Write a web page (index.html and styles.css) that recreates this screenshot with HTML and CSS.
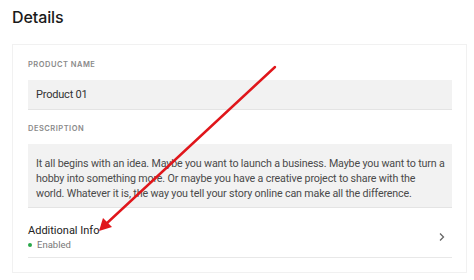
FILE: index.html
```html
<!DOCTYPE html>
<html>
<head>
<meta charset="utf-8">
<link rel="stylesheet" href="styles.css">
</head>
<body>
<div class="page">
  <h1 class="title">Details</h1>
  <div class="card">
    <div class="field">
      <div class="label">PRODUCT NAME</div>
      <div class="input">Product 01</div>
    </div>
    <div class="field">
      <div class="label">DESCRIPTION</div>
      <div class="textarea">It all begins with an idea. Maybe you want to launch a business. Maybe you want to turn a<br>hobby into something more. Or maybe you have a creative project to share with the<br>world. Whatever it is, the way you tell your story online can make all the difference.</div>
    </div>
    <div class="row">
      <div class="row-text">
        <div class="row-title">Additional Info</div>
        <div class="status"><span class="dot"></span>Enabled</div>
      </div>
      <svg class="chev" width="8" height="10" viewBox="0 0 8 10"><path d="M2 1.5 L5.5 5 L2 8.5" fill="none" stroke="#666" stroke-width="1.3"/></svg>
    </div>
  </div>
  <svg class="arrow" width="474" height="280" viewBox="0 0 474 280">
    <line x1="275" y1="67" x2="106" y2="224" stroke="#e0161b" stroke-width="2.4" stroke-linecap="round"/>
    <polygon points="99,231 103,218 112,227" fill="#e0161b"/>
  </svg>
</div>
</body>
</html>
```
FILE: styles.css
```css
* { box-sizing: border-box; }
html, body { margin: 0; padding: 0; background: #fff; }
body { font-family: Roboto, Inter, "Noto Sans", sans-serif; color: #1a1a1a; }
.page { position: relative; width: 474px; height: 280px; padding: 6px 7px 0 12px; overflow: hidden; }
.title { margin: 0; font-family: Inter, sans-serif; font-size: 16px; font-weight: 500; line-height: 22px; letter-spacing: -0.1px; }
.card { margin-top: 16px; border: 1px solid #f1f1f1; height: 229px; padding: 14px 14px 0 15px; }
.label { font-family: Inter, sans-serif; font-size: 7.5px; font-weight: 600; letter-spacing: 0.5px; color: #8a8a8a; line-height: 10px; margin-top: 1px; }
.input { margin-top: 10px; height: 30px; background: #f2f2f2; border-bottom: 1px solid #e4e4e4; font-size: 11px; color: #333; padding: 0 8px; line-height: 29px; letter-spacing: -0.2px; }
.field + .field { margin-top: 14px; }
.textarea { margin-top: 10px; background: #f2f2f2; border-bottom: 1px solid #e4e4e4; font-size: 10.7px; color: #4a4a4a; padding: 12px 8px 6px; line-height: 15px; white-space: nowrap; letter-spacing: -0.15px; }
.row { display: flex; align-items: center; justify-content: space-between; margin-top: 14px; height: 36px; border-bottom: 1px solid #e8e8e8; padding-bottom: 5px; padding-right: 6px; }
.row-title { font-size: 11px; color: #222; line-height: 14px; }
.status { display: flex; align-items: center; font-size: 9.5px; color: #777; line-height: 12px; margin-top: 1px; }
.dot { width: 4px; height: 4px; border-radius: 50%; background: #2aa84a; margin-right: 5px; }
.chev { display: block; }
.arrow { position: absolute; left: 0; top: 0; }
```
